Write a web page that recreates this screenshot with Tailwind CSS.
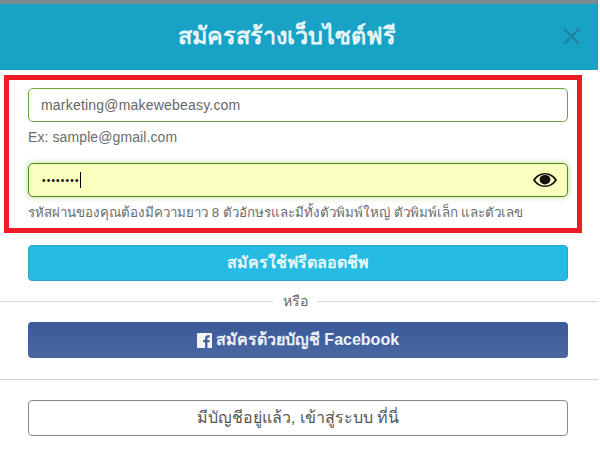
<!DOCTYPE html>
<html lang="th">

<head>
    <meta charset="UTF-8">
    <meta name="viewport" content="width=device-width, initial-scale=1.0">
    <script src="https://cdn.jsdelivr.net/npm/@tailwindcss/browser@4"></script>
    <title>สมัครสร้างเว็บไซต์ฟรี</title>
</head>

<body class="relative w-[600px] h-[465px] overflow-hidden bg-white font-['Liberation_Sans',sans-serif] text-[#666]">
    <div class="w-[598px] h-[4px] bg-[#7d8a8e]"></div>

    <!-- header -->
    <div class="flex items-center justify-center relative w-[598px] h-[66px] pr-[24px] bg-[#18a2c5]">
        <h1 class="text-[23.4px] font-bold text-[#e6f6fa]">สมัครสร้างเว็บไซต์ฟรี</h1>
        <svg class="absolute right-[18px] top-[24px]" width="17" height="17" viewBox="0 0 17 17" fill="none"
            stroke="#23809c" stroke-width="2">
            <path d="M1 1l15 15M16 1L1 16" />
        </svg>
    </div>

    <!-- form -->
    <div class="w-[540px] ml-[28px] pt-[18px]">
        <div class="flex items-center h-[34px] px-[12px] rounded-[5px] border border-[#6fa73f] bg-white text-[14px] tracking-[0.2px] text-[#666]">
            marketing@makewebeasy.com</div>
        <p class="mt-[7px] h-[16px] leading-[16px] text-[14px] tracking-[0.1px] text-[#6b6b6b]">Ex: sample@gmail.com</p>

        <div class="mt-[18px] flex items-center justify-between h-[34px] pl-[13px] pr-[10px] rounded-[5px] border border-[#4f8a1e] bg-[#fbffbd] shadow-[0_0_6px_rgba(120,190,40,0.55)]">
            <div class="flex items-center">
                <span class="text-[10px] tracking-[1.2px] text-black">••••••••</span>
                <span class="w-px h-[16px] bg-black"></span>
            </div>
            <svg width="24" height="14" viewBox="0 0 24 16" preserveAspectRatio="none">
                <path fill="#111" fill-rule="evenodd"
                    d="M12 0C6.6 0 2.4 3.3 0 8c2.4 4.700 6.600 8 12 8s9.600-3.300 12-8c-2.400-4.700-6.600-8-12-8zM2.200 8C4.300 4.300 7.800 1.600 12 1.600S19.700 4.300 21.800 8c-2.100 3.700-5.600 6.400-9.800 6.400S4.300 11.700 2.200 8z" />
                <circle cx="12" cy="7.600" r="5.400" fill="#111" />
            </svg>
        </div>
        <p class="mt-[8px] h-[16px] leading-[16px] text-[13.35px] whitespace-nowrap text-[#6b6b6b]">รหัสผ่านของคุณต้องมีความยาว 8 ตัวอักษรและมีทั้งตัวพิมพ์ใหญ่ ตัวพิมพ์เล็ก และตัวเลข</p>

        <button class="block w-full mt-[24px] h-[36px] rounded-[4px] border border-[#2aa5c6] bg-[#25bbe2] text-[16px] font-bold text-[#e9f8fc]">สมัครใช้ฟรีตลอดชีพ</button>
    </div>

    <!-- or divider -->
    <div class="flex items-center w-[598px] h-[20px] mt-[10px]">
        <div class="w-[273px] h-px bg-[#d5d5d5]"></div>
        <span class="w-[45px] text-center text-[14px] text-[#666]">หรือ</span>
        <div class="flex-1 h-px bg-[#d5d5d5]"></div>
    </div>

    <div class="w-[540px] ml-[28px] mt-[11px]">
        <button class="flex items-center justify-center gap-[4px] w-full h-[36px] rounded-[4px] bg-gradient-to-b from-[#3a5a98] to-[#4a67a3] text-[16px] font-bold text-[#eef2f8]">
            <svg width="15" height="15" viewBox="0 0 15 15">
                <rect width="15" height="15" rx="1" fill="#f2f4f8" />
                <path fill="#3f5e9c" d="M10.400 15V9.200h1.900l.3-2.300h-2.200V5.500c0-.7.200-1.100 1.100-1.100h1.200V2.300c-.2 0-.9-.1-1.700-.1-1.700 0-2.900 1-2.900 3v1.700H6.200v2.300h1.900V15z" />
            </svg>
            สมัครด้วยบัญชี Facebook
        </button>
    </div>

    <div class="w-[598px] h-px mt-[21px] bg-[#d5d5d5]"></div>

    <div class="w-[540px] ml-[28px] mt-[20px]">
        <button class="block w-full h-[36px] rounded-[4px] border border-[#8a8a8a] bg-white text-[16px] text-[#555]">มีบัญชีอยู่แล้ว, เข้าสู่ระบบ ที่นี่</button>
    </div>

    <!-- red annotation drawn over the screenshot -->
    <div class="absolute left-[4px] top-[75px] w-[578px] h-[158px] border-[5px] border-[#ed1c24]"></div>
</body>

</html>
